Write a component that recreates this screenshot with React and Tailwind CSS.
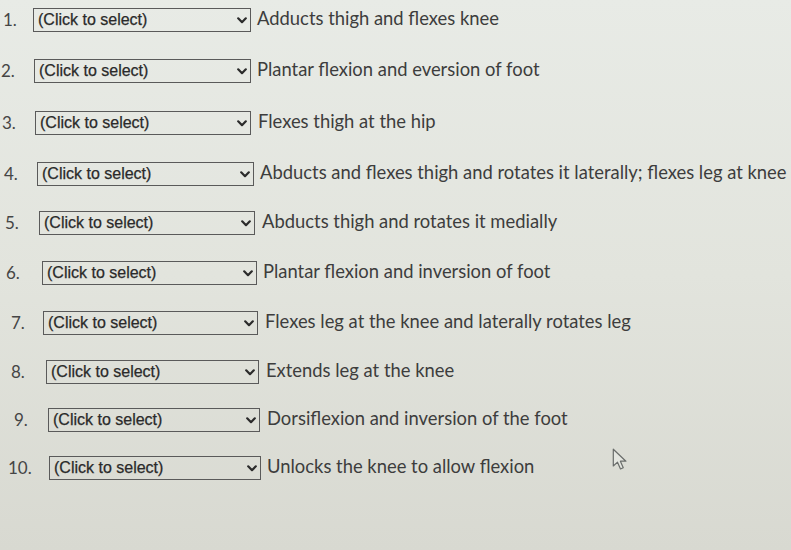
import React from "react";

const rows = [
  { n: "1.", d: "Adducts thigh and flexes knee", row: "mt-[8px]", num: "w-[33px] pl-[3px]", box: "w-[218px]", desc: "ml-[6px]" },
  { n: "2.", d: "Plantar flexion and eversion of foot", row: "mt-[27px]", num: "w-[34px] pl-[1px]", box: "w-[217px]", desc: "ml-[6px]" },
  { n: "3.", d: "Flexes thigh at the hip", row: "mt-[28px]", num: "w-[35px] pl-[2px]", box: "w-[216px]", desc: "ml-[7px]" },
  { n: "4.", d: "Abducts and flexes thigh and rotates it laterally; flexes leg at knee", row: "mt-[27px]", num: "w-[37px] pl-[4px]", box: "w-[217px]", desc: "ml-[6px]" },
  { n: "5.", d: "Abducts thigh and rotates it medially", row: "mt-[25px]", num: "w-[39px] pl-[5px]", box: "w-[216px]", desc: "ml-[7px]" },
  { n: "6.", d: "Plantar flexion and inversion of foot", row: "mt-[26px]", num: "w-[42px] pl-[6px]", box: "w-[215px]", desc: "ml-[6px]" },
  { n: "7.", d: "Flexes leg at the knee and laterally rotates leg", row: "mt-[26px]", num: "w-[43px] pl-[11px]", box: "w-[215px]", desc: "ml-[7px]" },
  { n: "8.", d: "Extends leg at the knee", row: "mt-[25px]", num: "w-[46px] pl-[11px]", box: "w-[213px]", desc: "ml-[7px]" },
  { n: "9.", d: "Dorsiflexion and inversion of the foot", row: "mt-[24px]", num: "w-[48px] pl-[14px]", box: "w-[212px]", desc: "ml-[7px]" },
  { n: "10.", d: "Unlocks the knee to allow flexion", row: "mt-[24px]", num: "w-[49px] pl-[8px]", box: "w-[212px]", desc: "ml-[6px]" },
];

function Chevron() {
  return (
    <svg width="10" height="7" viewBox="0 0 10 7" className="shrink-0">
      <path d="M1.2 1.3 L5 5.2 L8.8 1.3" fill="none" stroke="#2b2b2b" strokeWidth="2.2" strokeLinecap="round" strokeLinejoin="round" />
    </svg>
  );
}

function Cursor() {
  return (
    <svg width="17" height="24" viewBox="0 0 14 20" className="absolute left-[612px] top-[448px]">
      <path d="M1 1 L1 15 L4.5 11.8 L7 17.5 L9.3 16.5 L6.9 11 L11.5 11 Z" fill="#e4e6e0" stroke="#6a6d6b" strokeWidth="1" strokeLinejoin="round" />
    </svg>
  );
}

export default function App() {
  return (
    <div className="relative w-[791px] h-[550px] overflow-hidden bg-gradient-to-b from-[#e8ebe6] via-[#e2e4dd] to-[#d8d9d1]">
      <div className="flex flex-col">
        {rows.map((r) => (
          <div key={r.n} className={`flex items-center h-[24px] ${r.row}`}>
            <div className={`${r.num} shrink-0 text-[17px] text-[#454545] font-['Lato',sans-serif] leading-none -mt-[2px]`}>{r.n}</div>
            <div className={`${r.box} shrink-0 h-[24px] border border-[#5a5a5a] flex items-center justify-between pl-[4px] pr-[3px]`}>
              <span className="text-[16px] text-[#2a2a2a] font-['Liberation_Sans',Arial,sans-serif] leading-none [-webkit-text-stroke:0.25px_#2a2a2a]">(Click to select)</span>
              <Chevron />
            </div>
            <div className={`${r.desc} whitespace-nowrap text-[18.4px] text-[#3d3d3d] font-['Lato',sans-serif] leading-none -mt-[3px]`}>{r.d}</div>
          </div>
        ))}
      </div>
      <Cursor />
    </div>
  );
}
